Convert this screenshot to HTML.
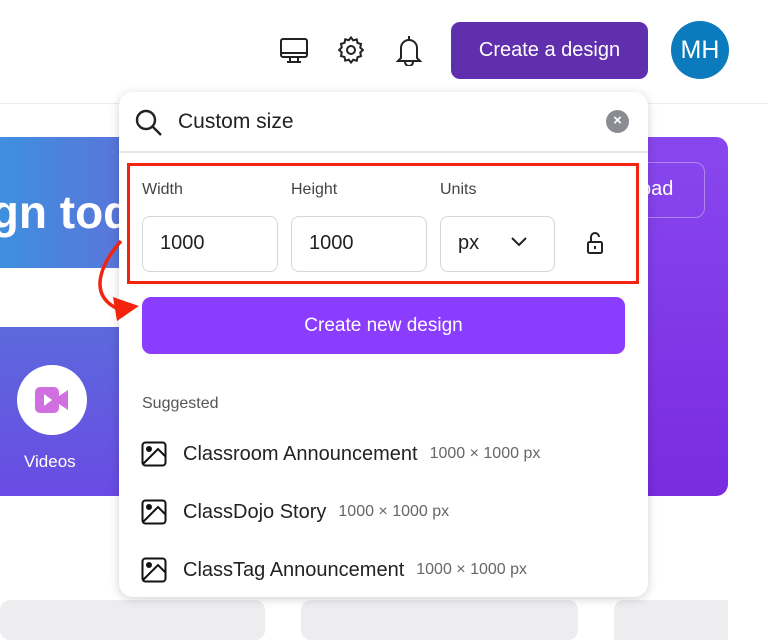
<!DOCTYPE html>
<html><head><style>
*{margin:0;padding:0;box-sizing:border-box}
body{width:768px;height:628px;position:relative;overflow:hidden;background:#fff;font-family:"Liberation Sans",sans-serif;color:#1a1a1a}
.abs{position:absolute}
.inp{position:absolute;top:216px;height:56px;border:1px solid #d3d6db;border-radius:8px;font-size:20px;padding:15px 0 0 17px;color:#222}
.lbl{position:absolute;top:181px;font-size:16px;color:#444}
.item{position:absolute;left:141px;height:26px;font-size:20px;color:#222;display:flex;align-items:center}
.item svg{margin-right:16px}
.item span{font-size:16px;color:#666;margin-left:12px}
</style></head><body>
<div class="abs" style="left:0;top:103px;width:768px;height:1px;background:#ececef"></div>
<div class="abs" style="left:0;top:137px;width:125px;height:131px;background:linear-gradient(90deg,#3f8fde,#5a75da)"></div>
<div class="abs" style="top:185px;font-size:46px;font-weight:bold;color:#fff;white-space:nowrap;left:-22px">ign tod</div>
<div class="abs" style="left:0;top:327px;width:125px;height:169px;background:linear-gradient(180deg,#5c69dc,#6a4be4)"></div>
<div class="abs" style="left:17px;top:365px;width:70px;height:70px;border-radius:50%;background:#fff"></div>
<svg class="abs" style="left:34px;top:386px" width="36" height="28" viewBox="0 0 36 28"><rect x="1" y="1" width="24" height="26" rx="5" fill="#d070e0"/><path d="M25 10 L34 4 V24 L25 18Z" fill="#d070e0"/><path d="M10 8 L18 14 L10 20Z" fill="#fff"/></svg>
<div class="abs" style="left:24px;top:452px;font-size:17px;color:#fff">Videos</div>
<div class="abs" style="left:620px;top:137px;width:108px;height:359px;border-radius:0 12px 12px 0;background:linear-gradient(180deg,#8847ee,#7a2be0)"></div>
<div class="abs" style="left:600px;top:162px;width:105px;height:56px;border:1px solid rgba(255,255,255,.35);border-radius:10px"></div>
<div class="abs" style="left:640px;top:178px;font-size:20px;color:#fff">oad</div>
<div class="abs" style="left:0;top:600px;width:265px;height:40px;border-radius:10px;background:#ededf0"></div>
<div class="abs" style="left:301px;top:600px;width:277px;height:40px;border-radius:10px;background:#ededf0"></div>
<div class="abs" style="left:614px;top:600px;width:114px;height:40px;border-radius:10px 0 0 0;background:#ededf0"></div>
<svg class="abs" style="left:279px;top:37px" width="30" height="28" viewBox="0 0 30 28" fill="none" stroke="#222" stroke-width="2"><rect x="2" y="2" width="26" height="18" rx="2"/><line x1="2" y1="16" x2="28" y2="16"/><path d="M11 20v4M19 20v4M8 25h14"/></svg>
<svg class="abs" style="left:336px;top:35px" width="30" height="30" viewBox="0 0 24 24" fill="none" stroke="#222" stroke-width="1.6"><circle cx="12" cy="12" r="3.2"/><path d="M12 2l1.8 2.3 2.8-.8.6 2.9 2.8.8-.6 2.9L21.5 12l-2.1 2 .6 2.9-2.8.8-.6 2.9-2.8-.8L12 22l-1.8-2.3-2.8.8-.6-2.9-2.8-.8.6-2.9L2.5 12l2.1-2-.6-2.9 2.8-.8.6-2.9 2.8.8z"/></svg>
<svg class="abs" style="left:395px;top:34px" width="28" height="32" viewBox="0 0 28 32" fill="none" stroke="#222" stroke-width="2"><path d="M14 2v3M6 24V14a8 8 0 0 1 16 0v10l3 3H3z"/><path d="M10 28a4 4 0 0 0 8 0"/></svg>
<div class="abs" style="left:451px;top:22px;width:197px;height:57px;border-radius:9px;background:#5f2fae;color:#fff;font-size:20px;text-align:center;line-height:57px">Create a design</div>
<div class="abs" style="left:671px;top:21px;width:58px;height:58px;border-radius:50%;background:#0b7bbd;color:#fff;font-size:25px;text-align:center;line-height:58px">MH</div>
<div class="abs" style="left:119px;top:92px;width:529px;height:505px;background:#fff;border-radius:14px;box-shadow:0 2px 10px rgba(0,0,0,.18)"></div>
<div class="abs" style="left:119px;top:151px;width:529px;height:2px;background:#e6e7ea"></div>
<svg class="abs" style="left:134px;top:108px" width="30" height="30" viewBox="0 0 30 30" fill="none" stroke="#222" stroke-width="2.4"><circle cx="12" cy="12" r="9"/><path d="M19 19l8 8"/></svg>
<div class="abs" style="left:178px;top:110px;font-size:21px;color:#222">Custom size</div>
<div class="abs" style="left:606px;top:110px;width:23px;height:23px;border-radius:50%;background:#8a8c91;color:#fff;font-size:15px;font-weight:bold;text-align:center;line-height:22px">×</div>
<div class="abs" style="left:127px;top:163px;width:512px;height:121px;border:3px solid #f4230f"></div>
<div class="lbl" style="left:142px">Width</div>
<div class="lbl" style="left:291px">Height</div>
<div class="lbl" style="left:440px">Units</div>
<div class="inp" style="left:142px;width:136px">1000</div>
<div class="inp" style="left:291px;width:136px">1000</div>
<div class="inp" style="left:440px;width:115px">px</div>
<svg class="abs" style="left:510px;top:236px" width="18" height="12" viewBox="0 0 18 12" fill="none" stroke="#222" stroke-width="2"><path d="M2 2l7 7 7-7"/></svg>
<svg class="abs" style="left:586px;top:231px" width="18" height="24" viewBox="0 0 18 24" fill="none" stroke="#222" stroke-width="2"><path d="M5 11V6a4 4 0 0 1 8 0"/><rect x="2" y="11" width="14" height="11" rx="1.5"/><path d="M9 15v3"/></svg>
<div class="abs" style="left:142px;top:297px;width:483px;height:57px;border-radius:9px;background:#8b3dff;color:#fff;font-size:19px;text-align:center;line-height:57px">Create new design</div>
<div class="abs" style="left:142px;top:395px;font-size:16px;color:#555">Suggested</div>
<div class="item" style="top:441px"><svg width="26" height="26" viewBox="0 0 26 26" fill="none" stroke="#111" stroke-width="2"><rect x="1.5" y="1.5" width="23" height="23" rx="3"/><circle cx="8" cy="8" r="2" fill="#111"/><path d="M2 23L17 8l7 7"/></svg>Classroom Announcement<span>1000 × 1000 px</span></div>
<div class="item" style="top:499px"><svg width="26" height="26" viewBox="0 0 26 26" fill="none" stroke="#111" stroke-width="2"><rect x="1.5" y="1.5" width="23" height="23" rx="3"/><circle cx="8" cy="8" r="2" fill="#111"/><path d="M2 23L17 8l7 7"/></svg>ClassDojo Story<span>1000 × 1000 px</span></div>
<div class="item" style="top:557px"><svg width="26" height="26" viewBox="0 0 26 26" fill="none" stroke="#111" stroke-width="2"><rect x="1.5" y="1.5" width="23" height="23" rx="3"/><circle cx="8" cy="8" r="2" fill="#111"/><path d="M2 23L17 8l7 7"/></svg>ClassTag Announcement<span>1000 × 1000 px</span></div>
<svg class="abs" style="left:0;top:0" width="768" height="628"><path d="M121 241 C100 265 88 295 118 309" fill="none" stroke="#f4230f" stroke-width="3.5"/><path d="M139 306 L113 297 L117 321Z" fill="#f4230f"/></svg>
</body></html>
